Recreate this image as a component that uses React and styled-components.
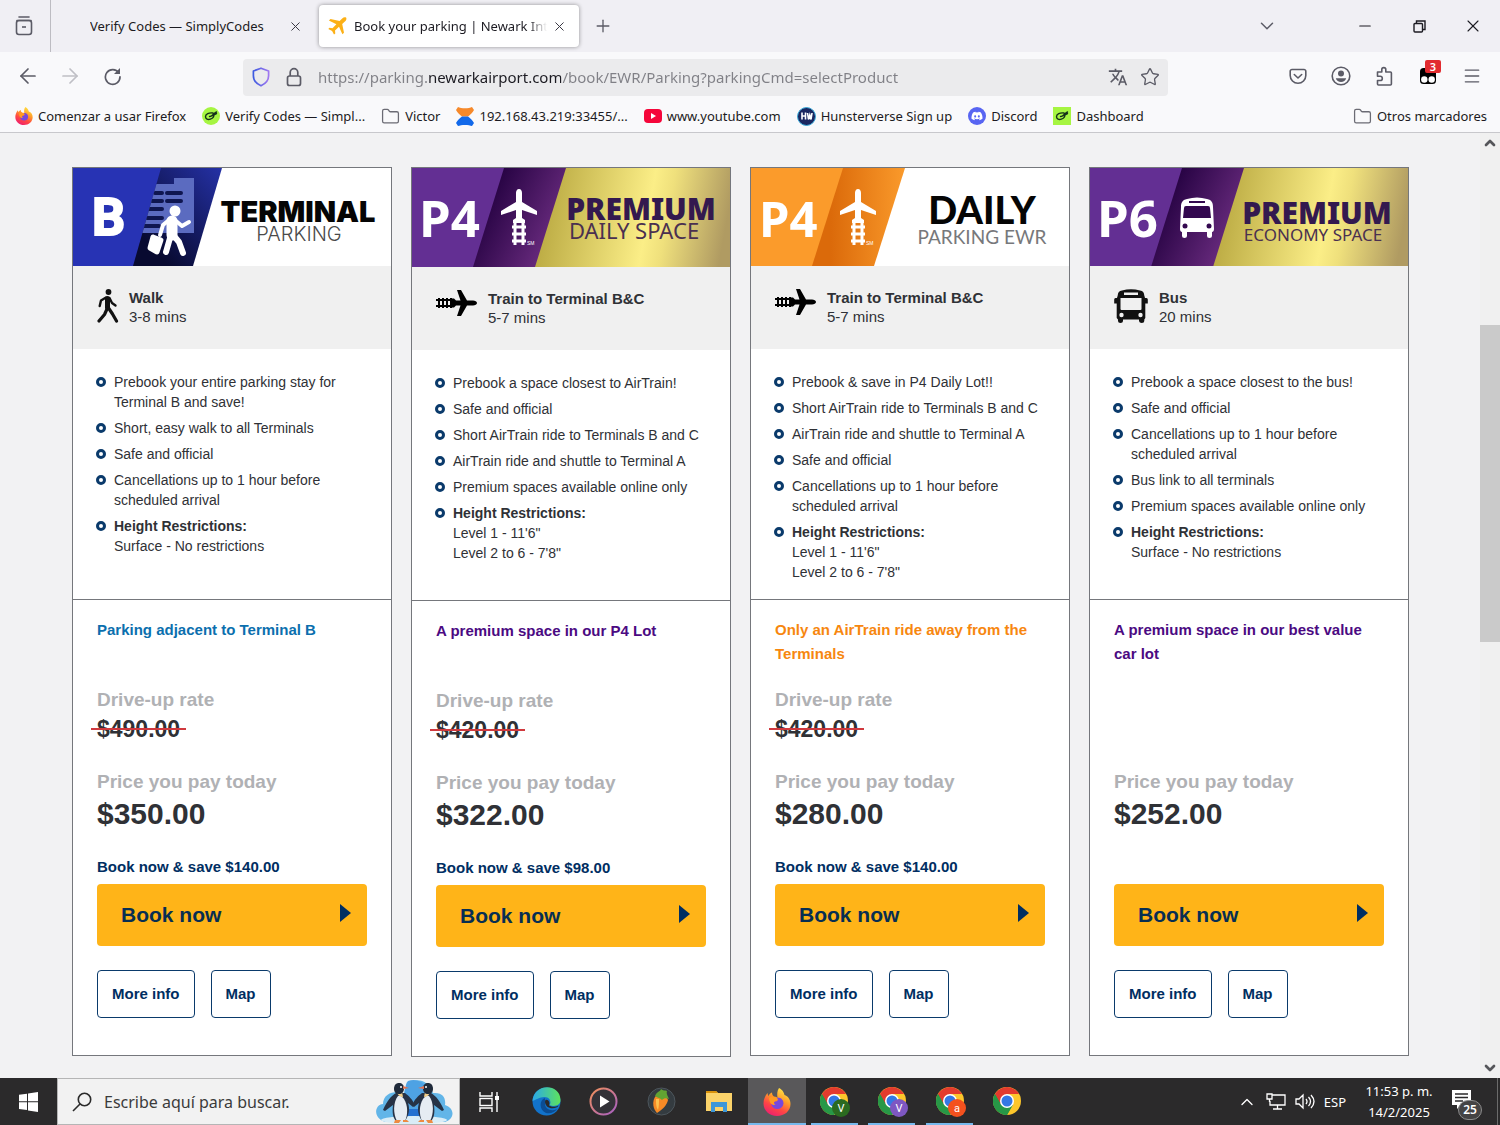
import React, { useId } from "react";
import styled, { createGlobalStyle } from "styled-components";
import {
  ArrowLeft,
  ArrowRight,
  ChevronDown,
  ChevronUp,
  Folder,
  Menu,
  Minus,
  Plus,
  Star,
  X,
} from "lucide-react";
import { FaDiscord } from "react-icons/fa";
import { MdTranslate } from "react-icons/md";

const uiFont = `"Noto Sans", "Open Sans", sans-serif`;
const pageFont = `"Liberation Sans", Arial, sans-serif`;

const products = [
  {
    banner: "terminal",
    mode: "walk",
    transit: "Walk",
    time: "3-8 mins",
    features: [
      "Prebook your entire parking stay for Terminal B and save!",
      "Short, easy walk to all Terminals",
      "Safe and official",
      "Cancellations up to 1 hour before scheduled arrival",
    ],
    heights: ["Surface - No restrictions"],
    tagline: "Parking adjacent to Terminal B",
    color: "#0b6fae",
    driveUp: "$490.00",
    price: "$350.00",
    save: "$140.00",
  },
  {
    banner: "premiumDaily",
    mode: "train",
    transit: "Train to Terminal B&C",
    time: "5-7 mins",
    features: [
      "Prebook a space closest to AirTrain!",
      "Safe and official",
      "Short AirTrain ride to Terminals B and C",
      "AirTrain ride and shuttle to Terminal A",
      "Premium spaces available online only",
    ],
    heights: ["Level 1 - 11'6\"", "Level 2 to 6 - 7'8\""],
    tagline: "A premium space in our P4 Lot",
    color: "#4b0a82",
    driveUp: "$420.00",
    price: "$322.00",
    save: "$98.00",
  },
  {
    banner: "daily",
    mode: "train",
    transit: "Train to Terminal B&C",
    time: "5-7 mins",
    features: [
      "Prebook & save in P4 Daily Lot!!",
      "Short AirTrain ride to Terminals B and C",
      "AirTrain ride and shuttle to Terminal A",
      "Safe and official",
      "Cancellations up to 1 hour before scheduled arrival",
    ],
    heights: ["Level 1 - 11'6\"", "Level 2 to 6 - 7'8\""],
    tagline: "Only an AirTrain ride away from the Terminals",
    color: "#f7870f",
    driveUp: "$420.00",
    price: "$280.00",
    save: "$140.00",
  },
  {
    banner: "economy",
    mode: "bus",
    transit: "Bus",
    time: "20 mins",
    features: [
      "Prebook a space closest to the bus!",
      "Safe and official",
      "Cancellations up to 1 hour before scheduled arrival",
      "Bus link to all terminals",
      "Premium spaces available online only",
    ],
    heights: ["Surface - No restrictions"],
    tagline: "A premium space in our best value car lot",
    color: "#4b0a82",
    price: "$252.00",
  },
];

const GlobalStyle = createGlobalStyle`
  *, *::before, *::after {
    box-sizing: border-box;
  }
  body {
    margin: 0;
    background: #f2f2f3;
    font-family: ${pageFont};
    color: #2f3136;
  }
  button, input {
    font: inherit;
    color: inherit;
  }
  svg {
    display: block;
    flex-shrink: 0;
  }
`;

const Screen = styled.div`
  display: flex;
  flex-direction: column;
  min-height: 100vh;
`;

/* ---------- browser ---------- */

const Browser = styled.header`
  font-family: ${uiFont};
  font-size: 13px;
  color: #1c1b22;
  background: #f9f9fb;
  border-bottom: 1px solid #c8c8cc;
`;

const IconButton = styled.button`
  display: flex;
  align-items: center;
  justify-content: center;
  width: ${(props) => props.$width || 42}px;
  height: 36px;
  padding: 0;
  border: 0;
  background: none;
  color: ${(props) => props.$color || "#5b5b66"};
`;

const TabStrip = styled.div`
  display: flex;
  align-items: center;
  height: 52px;
  background: #f0eff4;
`;

const RecentView = styled.div`
  display: flex;
  align-items: center;
  height: 52px;
  width: 51px;
  border-right: 1px solid #bdbcc2;
`;

const Tab = styled.div`
  display: flex;
  align-items: center;
  width: 260px;
  height: 42px;
  margin-left: ${(props) => (props.$active ? 0 : 8)}px;
  padding: ${(props) => (props.$active ? "0 8px 0 9px" : "0 12px 0 31px")};
  border-radius: 4px;
  background: ${(props) => (props.$active ? "#fff" : "transparent")};
  box-shadow: ${(props) => (props.$active ? "0 0 4px rgba(0, 0, 0, 0.4)" : "none")};
`;

const TabTitle = styled.span`
  flex: 1;
  margin-left: ${(props) => (props.$icon ? 7 : 0)}px;
  overflow: hidden;
  white-space: nowrap;
  mask-image: ${(props) => (props.$icon ? "linear-gradient(90deg, #000 90%, transparent)" : "none")};
`;

const WindowButtons = styled.div`
  display: flex;
  margin-left: auto;
`;

const NavBar = styled.div`
  display: flex;
  align-items: center;
  height: 48px;
  padding: 0 7px;
`;

const UrlBar = styled.div`
  display: flex;
  align-items: center;
  flex: 1;
  height: 37px;
  margin: 2px 108px 0 110px;
  padding: 0 3px 0 9px;
  border-radius: 4px;
  background: #ebebed;
`;

/* the host name is darker than the rest of the address */
const UrlInput = styled.input`
  flex: 1;
  min-width: 0;
  height: 30px;
  padding: 0;
  border: 0;
  font-size: 15px;
  outline: none;
  color: transparent;
  background: linear-gradient(90deg, #808086 110px, #1c1b22 110px, #1c1b22 243px, #808086 243px);
  background-clip: text;
  -webkit-background-clip: text;
`;

const ExtensionIcon = styled.span`
  position: relative;
`;

const ExtensionBadge = styled.span`
  position: absolute;
  top: -7px;
  left: 6px;
  width: 16px;
  height: 13px;
  border-radius: 2px;
  background: #e22b2f;
  color: #fff;
  font-size: 11px;
  font-weight: 600;
  line-height: 13px;
  text-align: center;
`;

const BookmarkBar = styled.nav`
  display: flex;
  align-items: center;
  gap: 16px;
  height: 32px;
  padding: 0 13px 0 15px;
`;

const Bookmark = styled.a`
  display: flex;
  align-items: center;
  gap: 5px;
  margin-left: ${(props) => (props.$last ? "auto" : 0)};
  color: inherit;
  text-decoration: none;
  white-space: nowrap;
`;

const RecentIcon = () => (
  <svg width="18" height="20" viewBox="0 0 18 20" fill="none" stroke="#5b5b66" strokeWidth="1.6">
    <path d="M4 1h10" strokeLinecap="round" />
    <path d="M2 4.5h14" strokeLinecap="round" />
    <rect x="1.5" y="4.5" width="15" height="14" rx="2.5" />
    <path d="M7 11h4" />
  </svg>
);

const ReloadIcon = () => (
  <svg width="19" height="19" viewBox="0 0 19 19" fill="none" stroke="#5b5b66" strokeWidth="1.7">
    <path d="M15.8 6A7.3 7.3 0 1 0 17 9.8" strokeLinecap="round" />
    <path d="M17 1v6h-6z" fill="#5b5b66" stroke="none" />
  </svg>
);

const PlaneIcon = () => (
  <svg width="19" height="18" viewBox="0 0 19 18" fill="#fcb016">
    <path d="M18 .6c-1-.9-2.600-.3-3.800.8L11.600 4 2.500 2 .9 3.400l7.500 3.800-3.900 4-3-.4L.3 12l3.800 2.100L6 17.600l1.300-1.100-.3-3.100 4-3.700 3.400 7.600 1.600-1.500L14.200 7l2.700-2.500C18.200 3.300 18.900 1.600 18 .6z" />
  </svg>
);

const ShieldIcon = () => {
  const id = useId();
  return (
    <svg width="18" height="20" viewBox="0 0 18 20" fill="none">
      <defs>
        <linearGradient id={id}>
          <stop offset="0" stopColor="#3d5be0" />
          <stop offset="1" stopColor="#a078f0" />
        </linearGradient>
      </defs>
      <path d="M9 1.200 16.600 4v4.800c0 4.300-2.700 7.800-7.600 10-4.900-2.200-7.600-5.700-7.600-10V4z" stroke={`url(#${id})`} strokeWidth="1.7" strokeLinejoin="round" />
    </svg>
  );
};

const LockIcon = () => (
  <svg width="16" height="20" viewBox="0 0 16 20" fill="none" stroke="#5b5b66" strokeWidth="1.700">
    <rect x="1.500" y="9" width="13" height="9.500" rx="2" />
    <path d="M4.200 9V5.500a3.800 3.800 0 0 1 7.600 0V9" />
  </svg>
);

const PocketIcon = () => (
  <svg width="18" height="17" viewBox="0 0 18 17" fill="none" stroke="#5b5b66" strokeWidth="1.6" strokeLinecap="round" strokeLinejoin="round">
    <path d="M3 1.500h12a1.800 1.800 0 0 1 1.800 1.800V7.500a7.800 7.800 0 0 1-15.600 0V3.300A1.800 1.800 0 0 1 3 1.500z" />
    <path d="M5.300 6.500 9 10l3.700-3.500" />
  </svg>
);

const AccountIcon = () => (
  <svg width="20" height="20" viewBox="0 0 20 20">
    <circle cx="10" cy="10" r="8.800" fill="none" stroke="#5b5b66" strokeWidth="1.600" />
    <circle cx="10" cy="7.500" r="3" fill="#5b5b66" />
    <path d="M4.800 12.300h10.400c-.5 2.400-2.800 3.700-5.200 3.700s-4.700-1.300-5.200-3.700z" fill="#5b5b66" />
  </svg>
);

const PuzzleIcon = () => (
  <svg width="18" height="20" viewBox="0 0 18 20" fill="none" stroke="#5b5b66" strokeWidth="1.600" strokeLinejoin="round">
    <path d="M2.500 6h4.300V3.600a2 2 0 0 1 4 0V6h4.600a1 1 0 0 1 1 1v11a1 1 0 0 1-1 1H3.500a1 1 0 0 1-1-1v-3.500h2.700a2 2 0 0 0 0-4.200H2.500z" />
  </svg>
);

const MonkeyIcon = () => (
  <svg width="18" height="18" viewBox="0 0 18 18">
    <rect x="1" y="1" width="16" height="16" rx="3.500" />
    <circle cx="5.300" cy="12.500" r="3.200" fill="#fff" />
    <circle cx="12.700" cy="12.500" r="3.200" fill="#fff" />
  </svg>
);

const RestoreIcon = () => (
  <svg width="13" height="13" viewBox="0 0 13 13" fill="none" stroke="#1c1b22" strokeWidth="1.400">
    <rect x="1" y="3.500" width="8.500" height="8.500" rx="1" />
    <path d="M3.500 3.500V1H12v8.500H9.500" />
  </svg>
);

const FirefoxIcon = ({ size }) => {
  const id = useId();
  return (
    <svg width={size} height={size} viewBox="0 0 28 28">
      <defs>
        <linearGradient id={id} x1="0.800" y1="0" x2="0.300" y2="1">
          <stop offset="0" stopColor="#fff04a" />
          <stop offset="0.400" stopColor="#ff9a28" />
          <stop offset="0.700" stopColor="#ff4545" />
          <stop offset="1" stopColor="#ee1f70" />
        </linearGradient>
      </defs>
      <path d="M16 0c4 2 5 5 5.500 7C25 8 27.500 11.500 27.500 16c0 7-6 12-13.500 12S.5 22.500.5 15.500c0-4 1.500-7.500 4-10.500l.7 3.200C6 6.500 7.500 5 9 4.500c0 1.500.5 3 2 4 2 .3 3 .5 3.500 1.500C14 6 14 3 16 0z" fill={`url(#${id})`} />
      <path d="M14.500 9.500c4 0 6 3 6 6a6.300 6.300 0 0 1-12.500 0c0-1 .2-2 .8-2.800 1 .8 2.200 1 3.700.8 1-.2 2-.8 2.500-1.600-1-.3-1.500-1-.5-2.400z" fill="#7748dc" />
      <path d="M6 10c2-1.500 4-1.500 5.500-.5 1.500.3 3 .7 3.500 1.800-1 1.200-2.500 1.400-3.500 2.400-1 .8-.5 2.300 1 2.800-3 1.500-6-1-6.500-6.500z" fill="#ff9a22" />
    </svg>
  );
};

const SimplyCodesIcon = ({ round }) => (
  <svg width="18" height="18" viewBox="0 0 18 18">
    <rect width="18" height="18" rx={round ? 9 : 0} fill="#a6f542" />
    <path d="M11 6C7 5.500 3.500 7 3.500 9.800c0 2.300 2.500 3.200 4.800 2.400 2.700-.9 3.900-3 3.400-5.200M7.500 9.500c2 .5 4-3 7-4.500M10.500 8.500l4-2" fill="none" stroke="#14301a" strokeWidth="1.400" strokeLinecap="round" />
  </svg>
);

const HourglassIcon = () => (
  <svg width="18" height="19" viewBox="0 0 18 19">
    <path d="M2 0c3 1.800 11 1.800 14 0l2 3c-1.500 3-4 5-6 6.500H6C4 8 1.500 6 0 3z" fill="#f6892b" />
    <path d="M2 19c3-1.500 11-1.500 14 0l2-3c-1.500-3-4-5-6-6.500H6C4 11 1.500 13 0 16z" fill="#1269ea" />
    <path d="M0 6.500 5 9.500 0 12.500zM18 6.500l-5 3 5 3z" fill="#f9f9fb" />
  </svg>
);

const YoutubeIcon = () => (
  <svg width="18" height="14" viewBox="0 0 18 14">
    <rect width="18" height="14" rx="4" fill="#f5063a" />
    <path d="m7 4 5 3-5 3z" fill="#fff" />
  </svg>
);

const HunsterIcon = () => (
  <svg width="19" height="19" viewBox="0 0 19 19">
    <circle cx="9.500" cy="9.500" r="9" fill="#1a2760" stroke="#39a9d8" />
    <path d="M5 5.500v7M8.500 5.500v7M5 9h3.500M10.500 6l1 6.500 1.300-4.500 1.200 4.500 1-6.500" fill="none" stroke="#fff" strokeWidth="1.600" />
  </svg>
);

const DiscordBadge = styled.span`
  display: flex;
  align-items: center;
  justify-content: center;
  width: 18px;
  height: 18px;
  border-radius: 50%;
  background: #5865f2;
  color: #fff;
`;

const FolderIcon = () => <Folder size={19} strokeWidth={1.600} color="#6b6b74" />;

const bookmarks = [
  { label: "Comenzar a usar Firefox", icon: <FirefoxIcon size={18} /> },
  { label: "Verify Codes — Simpl...", icon: <SimplyCodesIcon round /> },
  { label: "Victor", icon: <FolderIcon /> },
  { label: "192.168.43.219:33455/...", icon: <HourglassIcon /> },
  { label: "www.youtube.com", icon: <YoutubeIcon /> },
  { label: "Hunsterverse Sign up", icon: <HunsterIcon /> },
  { label: "Discord", icon: <DiscordBadge><FaDiscord size={12} /></DiscordBadge> },
  { label: "Dashboard", icon: <SimplyCodesIcon /> },
  { label: "Otros marcadores", icon: <FolderIcon />, last: true },
];

const BrowserChrome = () => (
  <Browser>
    <TabStrip>
      <RecentView>
        <IconButton $width={48} aria-label="Recent"><RecentIcon /></IconButton>
      </RecentView>
      <Tab>
        <TabTitle>Verify Codes — SimplyCodes</TabTitle>
        <IconButton $width={24} $color="#3a3944" aria-label="Close tab"><X size={15} strokeWidth={1.600} /></IconButton>
      </Tab>
      <Tab $active>
        <PlaneIcon />
        <TabTitle $icon>Book your parking | Newark International</TabTitle>
        <IconButton $width={24} $color="#3a3944" aria-label="Close tab"><X size={15} strokeWidth={1.600} /></IconButton>
      </Tab>
      <IconButton $width={48} aria-label="New tab"><Plus size={20} strokeWidth={1.600} /></IconButton>
      <WindowButtons>
        <IconButton $width={142} aria-label="All tabs"><ChevronDown size={22} strokeWidth={1.600} /></IconButton>
        <IconButton $width={54} $color="#1c1b22" aria-label="Minimize"><Minus size={18} strokeWidth={1.500} /></IconButton>
        <IconButton $width={54} aria-label="Restore"><RestoreIcon /></IconButton>
        <IconButton $width={54} $color="#1c1b22" aria-label="Close"><X size={20} strokeWidth={1.300} /></IconButton>
      </WindowButtons>
    </TabStrip>
    <NavBar>
      <IconButton aria-label="Back"><ArrowLeft size={24} strokeWidth={1.700} /></IconButton>
      <IconButton $color="#bfbfc5" aria-label="Forward"><ArrowRight size={24} strokeWidth={1.700} /></IconButton>
      <IconButton aria-label="Reload"><ReloadIcon /></IconButton>
      <UrlBar>
        <ShieldIcon />
        <IconButton $width={48} aria-label="Site information"><LockIcon /></IconButton>
        <UrlInput aria-label="Address" defaultValue="https://parking.newarkairport.com/book/EWR/Parking?parkingCmd=selectProduct" />
        <IconButton $width={34} aria-label="Translate"><MdTranslate size={20} /></IconButton>
        <IconButton $width={30} aria-label="Bookmark"><Star size={20} strokeWidth={1.600} /></IconButton>
      </UrlBar>
      <IconButton $width={44} aria-label="Pocket"><PocketIcon /></IconButton>
      <IconButton $width={42} aria-label="Account"><AccountIcon /></IconButton>
      <IconButton $width={44} aria-label="Extensions"><PuzzleIcon /></IconButton>
      <IconButton $width={44} aria-label="Scripts">
        <ExtensionIcon>
          <MonkeyIcon />
          <ExtensionBadge>3</ExtensionBadge>
        </ExtensionIcon>
      </IconButton>
      <IconButton $width={43} aria-label="Menu"><Menu size={20} strokeWidth={1.600} /></IconButton>
    </NavBar>
    <BookmarkBar>
      {bookmarks.map((item) => (
        <Bookmark key={item.label} href="#" $last={item.last}>
          {item.icon}
          {item.label}
        </Bookmark>
      ))}
    </BookmarkBar>
  </Browser>
);

/* ---------- banners ---------- */

const BannerSvg = styled.svg`
  width: 100%;
  height: auto;
`;

const ControlTower = () => (
  <g fill="#fff">
    <path d="M107 21c2 0 3 2 3 4v9l15 9v4l-15-5v8l3 2v3h-12v-3l3-2v-8l-15 5v-4l15-9v-9c0-2 1-4 3-4z" />
    <path d="M103 53v24M111 53v24M100 59h14M100 66h14M100 73h14" stroke="#fff" strokeWidth="3" />
    <text x="115" y="77" fontSize="5" fontFamily="Liberation Sans">SM</text>
  </g>
);

const BannerBus = () => (
  <g>
    <path d="M97 31q10-3 20 0c5 1 6 4 6 8l1 22c0 2-1 3-2 3v4q0 2-2.500 2t-2.500-2v-4H97v4q0 2-2.500 2T92 68v-4c-1 0-2-1-2-3l1-22c0-4 1-7 6-8z" fill="#fff" />
    <path d="M99 33h16v2H99zM96 38h22q2 0 2 2l1 10H93l1-10q0-2 2-2z" fill="#33084f" />
    <circle cx="95" cy="58" r="2.500" fill="#33084f" />
    <circle cx="119" cy="58" r="2.500" fill="#33084f" />
  </g>
);

const PurpleGold = ({ id, code, children }) => (
  <>
    <defs>
      <linearGradient id={`${id}-strip`} x1="0" y1="0" x2="1" y2="0.500">
        <stop offset="0.200" stopColor="#22003f" />
        <stop offset="1" stopColor="#6b2c80" />
      </linearGradient>
      <linearGradient id={`${id}-gold`} gradientUnits="userSpaceOnUse" x1="125" y1="0" x2="318" y2="35">
        <stop offset="0" stopColor="#b3a23a" />
        <stop offset="0.600" stopColor="#fbee87" />
        <stop offset="0.700" stopColor="#efe07c" />
        <stop offset="1" stopColor="#b09b62" />
      </linearGradient>
    </defs>
    <path d="M0 0h318v99H0z" fill={`url(#${id}-gold)`} />
    <path d="M0 0h93L62 99H0z" fill="#632f93" />
    <path d="M92 0h62l-31 99H61z" fill={`url(#${id}-strip)`} />
    <text x="7" y="69" fontSize="51" fontWeight="700" fontFamily="Noto Sans" fill="#fff">{code}</text>
    {children}
  </>
);

const banners = {
  terminal: {
    title: "B Terminal parking",
    height: 98,
    art: (id) => (
      <>
        <defs>
          <linearGradient id={`${id}-strip`} x1="0" y1="1" x2="1" y2="0">
            <stop offset="0.200" stopColor="#080a30" />
            <stop offset="1" stopColor="#2531a6" />
          </linearGradient>
          <clipPath id={`${id}-clip`}>
            <path d="M88 0h61l-29 98H60z" />
          </clipPath>
        </defs>
        <path d="M0 0h318v98H0z" fill="#fff" />
        <path d="M0 0h89L61 98H0z" fill="#2733b4" />
        <path d="M88 0h61l-29 98H60z" fill={`url(#${id}-strip)`} />
        <g clipPath={`url(#${id}-clip)`}>
          <path d="M60 16h41v-6h20v55H60z" fill="#5b6bc0" />
          <path d="M82 25h7M94 25h14M79 33h10M94 33h14M76 41h13M74 50h15M71 58h15" stroke="#0f1650" strokeWidth="4" strokeLinecap="round" />
        </g>
        <g stroke="#fff" fill="none" strokeLinecap="round" strokeLinejoin="round">
          <circle cx="102" cy="43" r="5.500" fill="#fff" stroke="none" />
          <path d="M99 53v14" strokeWidth="11" />
          <path d="M96 52l-6 5-3 10" strokeWidth="4" />
          <path d="M103 53l6 5 7-4" strokeWidth="4" />
          <path d="M97 70l-4 14M101 68l5 6 4 11" strokeWidth="6" />
          <path d="M80 69l8 3-4 12-7-4z" fill="#fff" strokeWidth="5" />
        </g>
        <text x="19" y="67" fontSize="52" fontWeight="700" fontFamily="Liberation Sans Narrow, Roboto" fill="#fff" stroke="#fff" strokeWidth="2">B</text>
        <text x="225" y="54" textAnchor="middle" fontSize="29" fontWeight="900" fontFamily="Inter" fill="#050505">TERMINAL</text>
        <text x="226" y="73" textAnchor="middle" fontSize="20" fontWeight="300" fontFamily="Inter" fill="#4a4a4a">PARKING</text>
      </>
    ),
  },
  premiumDaily: {
    title: "P4 Premium daily space",
    height: 99,
    art: (id) => (
      <PurpleGold id={id} code="P4">
        <ControlTower />
        <text x="229" y="52" textAnchor="middle" fontSize="30" fontWeight="900" fontFamily="Noto Sans" fill="#33194f">PREMIUM</text>
        <text x="222" y="71" textAnchor="middle" fontSize="22" fontFamily="Noto Sans" fill="#4a3050">DAILY SPACE</text>
      </PurpleGold>
    ),
  },
  daily: {
    title: "P4 Daily parking EWR",
    height: 98,
    art: (id) => (
      <>
        <defs>
          <linearGradient id={`${id}-strip`} x1="0" y1="0" x2="1" y2="0">
            <stop offset="0.200" stopColor="#db6a0a" />
            <stop offset="1" stopColor="#fa9a2b" />
          </linearGradient>
        </defs>
        <path d="M0 0h318v98H0z" fill="#fff" />
        <path d="M0 0h93L62 98H0z" fill="#fb9b2b" />
        <path d="M92 0h62l-31 98H61z" fill={`url(#${id}-strip)`} />
        <text x="8" y="69" fontSize="49" fontWeight="700" fontFamily="Noto Sans" fill="#fff">P4</text>
        <ControlTower />
        <text x="231" y="56" textAnchor="middle" fontSize="38" fontWeight="900" fontFamily="Lato" fill="#050505">DAILY</text>
        <text x="231" y="76" textAnchor="middle" fontSize="19" fontFamily="Lato" fill="#77787b">PARKING EWR</text>
      </>
    ),
  },
  economy: {
    title: "P6 Premium economy space",
    height: 98,
    art: (id) => (
      <PurpleGold id={id} code="P6">
        <BannerBus />
        <text x="227" y="56" textAnchor="middle" fontSize="30" fontWeight="900" fontFamily="Noto Sans" fill="#33194f">PREMIUM</text>
        <text x="223" y="73" textAnchor="middle" fontSize="17" fontFamily="Noto Sans" fill="#4a3050">ECONOMY SPACE</text>
      </PurpleGold>
    ),
  },
};

const Banner = ({ name }) => {
  const id = useId();
  const { title, height, art } = banners[name];
  return (
    <BannerSvg viewBox={`0 0 318 ${height}`} role="img" aria-label={title}>
      {art(id)}
    </BannerSvg>
  );
};

const WalkIcon = () => (
  <svg width="22" height="34" viewBox="0 0 22 34" fill="none" stroke="#111" strokeLinecap="round" strokeLinejoin="round">
    <circle cx="11.500" cy="3" r="2.900" fill="#111" stroke="none" />
    <path d="M10.500 9.500v9" strokeWidth="5" />
    <path d="M9 8.500 4 11.500 2.700 17M12.500 9l2.500 5 3.500 2.500" strokeWidth="2.400" />
    <path d="M10 20 7.500 25.500 2 32M11.500 19l4 6 4 7" strokeWidth="3.200" />
  </svg>
);

const TrainIcon = () => (
  <svg width="42" height="26" viewBox="0 0 42 26">
    <path d="M41 13c0-1.500-2-2.500-4-2.500h-6L25 0h-4l3.500 10.500H20l-2-2h-2v9h2l2-2h4.500L21 26h4l6-10.500h6c2 0 4-1 4-2.500z" />
    <path d="M0 10h18M0 16h18M3 8v10M7 8v10M11 8v10M15 8v10" stroke="#000" strokeWidth="2" />
  </svg>
);

const BusIcon = () => (
  <svg width="34" height="34" viewBox="0 0 34 34">
    <path d="M8 1.500q9-2.500 18 0c3 .5 4 2 4.300 5L31 9h1.500q1.300 0 1.300 1.500v4h-2.500V29l-1 1.500V32q0 2-2.500 2T25 32v-1.500H9V32q0 2-2.500 2T4 32v-1.500L2.700 29V14.500H.2v-4Q.2 9 1.500 9H3l.7-2.500c.3-3 1.300-4.500 4.300-5z" fill="#111" />
    <path d="M10 3.500h14v2.500H10zM6.500 9h21v11q0 1-1 1h-19q-1 0-1-1z" fill="#f0f0f0" />
    <circle cx="7.500" cy="26" r="2.200" fill="#f0f0f0" />
    <circle cx="26.500" cy="26" r="2.200" fill="#f0f0f0" />
  </svg>
);

/* ---------- cards ---------- */

const modes = {
  walk: { icon: <WalkIcon />, width: 22, height: 36, gap: 10 },
  train: { icon: <TrainIcon />, width: 42, height: 28, gap: 10 },
  bus: { icon: <BusIcon />, width: 34, height: 36, gap: 11 },
};

const Viewport = styled.div`
  display: flex;
  flex: 1;
`;

const CardGrid = styled.main`
  display: grid;
  grid-template-columns: repeat(4, minmax(0, 1fr));
  align-items: start;
  gap: 19px;
  flex: 1;
  padding: 34px 71px 21px 72px;
`;

const Card = styled.article`
  border: 1px solid #75777c;
  background: #fff;
`;

const Transit = styled.div`
  display: flex;
  gap: ${(props) => props.$gap}px;
  height: 83px;
  padding: 22px 24px 0;
  background: #f0f0f0;
  font-size: 15px;
  line-height: 19px;
`;

const TransitIcon = styled.div`
  display: flex;
  align-items: center;
  justify-content: center;
  width: ${(props) => props.$width}px;
  height: ${(props) => props.$height}px;
`;

const TransitText = styled.div`
  display: flex;
  flex-direction: column;
`;

const Features = styled.ul`
  display: flex;
  flex-direction: column;
  gap: 6px;
  min-height: 251px;
  margin: 0;
  padding: 23px 20px 0 23px;
  border-bottom: 1px solid #75777c;
  list-style: none;
  font-size: 14px;
  line-height: 20px;
`;

const Feature = styled.li`
  display: flex;
  gap: 8px;

  &::before {
    content: "";
    flex: none;
    width: 10px;
    height: 10px;
    margin-top: 5px;
    border: 3px solid #0a3a6b;
    border-radius: 50%;
  }
`;

const Pricing = styled.div`
  display: flex;
  flex-direction: column;
  padding: 18px 24px 37px;
`;

const Tagline = styled.h2`
  min-height: 48px;
  margin: 0;
  color: ${(props) => props.$color};
  font-size: 15px;
  line-height: 24px;
`;

const Rate = styled.div`
  min-height: 58px;
  margin-top: 22px;
`;

const RateLabel = styled.div`
  color: #b0b1b4;
  font-size: 19px;
  font-weight: 700;
  line-height: 24px;
`;

const OldPrice = styled.s`
  display: inline-block;
  position: relative;
  font-size: 23px;
  font-weight: 700;
  line-height: 34px;
  text-decoration: none;

  &::after {
    content: "";
    position: absolute;
    left: -6px;
    right: -6px;
    top: 16px;
    height: 2px;
    background: #d0393e;
  }
`;

const TodayRate = styled.div`
  margin-top: 24px;
`;

const Price = styled.div`
  font-size: 30px;
  font-weight: 700;
  line-height: 40px;
`;

const Saving = styled.div`
  min-height: 24px;
  margin: 21px 0 5px;
  color: #002e62;
  font-size: 15px;
  font-weight: 700;
  line-height: 24px;
`;

const BookButton = styled.button`
  display: flex;
  align-items: center;
  justify-content: space-between;
  height: 62px;
  padding: 0 16px 0 24px;
  border: 0;
  border-radius: 4px;
  background: #ffb418;
  color: #072e52;
  font-size: 21px;
  font-weight: 700;

  &::after {
    content: "";
    margin-bottom: 4px;
    border: solid transparent;
    border-width: 9px 0 9px 11px;
    border-left-color: #002e62;
  }
`;

const CardLinks = styled.div`
  display: flex;
  gap: 16px;
  margin-top: 24px;
`;

const OutlineButton = styled.button`
  height: 48px;
  padding: 0 14px 2px;
  border: 1px solid #0a3a6b;
  border-radius: 4px;
  background: #fff;
  color: #002e62;
  font-size: 15px;
  font-weight: 700;
`;

const ProductCard = (props) => {
  const { banner, mode, transit, time, features, heights, tagline, color, driveUp, price, save } = props;
  const { icon, width, height, gap } = modes[mode];
  return (
    <Card>
      <Banner name={banner} />
      <Transit $gap={gap}>
        <TransitIcon $width={width} $height={height}>{icon}</TransitIcon>
        <TransitText>
          <strong>{transit}</strong>
          <span>{time}</span>
        </TransitText>
      </Transit>
      <Features>
        {features.map((text) => (
          <Feature key={text}>{text}</Feature>
        ))}
        <Feature>
          <div>
            <strong>Height Restrictions:</strong>
            {heights.map((line) => (
              <div key={line}>{line}</div>
            ))}
          </div>
        </Feature>
      </Features>
      <Pricing>
        <Tagline $color={color}>{tagline}</Tagline>
        <Rate>
          {driveUp && (
            <>
              <RateLabel>Drive-up rate</RateLabel>
              <OldPrice>{driveUp}</OldPrice>
            </>
          )}
        </Rate>
        <TodayRate>
          <RateLabel>Price you pay today</RateLabel>
          <Price>{price}</Price>
        </TodayRate>
        <Saving>{save && `Book now & save ${save}`}</Saving>
        <BookButton>Book now</BookButton>
        <CardLinks>
          <OutlineButton>More info</OutlineButton>
          <OutlineButton>Map</OutlineButton>
        </CardLinks>
      </Pricing>
    </Card>
  );
};

const ScrollBar = styled.div`
  display: flex;
  flex-direction: column;
  align-items: center;
  width: 20px;
  background: #f0f0f0;
  color: #55565a;
`;

const ScrollArrow = styled.div`
  display: flex;
  align-items: center;
  height: 20px;
`;

const ScrollTrack = styled.div`
  display: flex;
  flex-direction: column;
  flex: 1;
  width: 100%;
`;

const ScrollThumb = styled.div`
  flex: 0 0 35%;
  background: #cacaca;
`;

const ScrollSpace = styled.div`
  flex: 0 0 19%;
`;

/* ---------- taskbar ---------- */

const TaskBar = styled.footer`
  display: flex;
  height: 47px;
  background: #2b2a2b;
  color: #fff;
  font-family: ${uiFont};
`;

const StartButton = styled.button`
  display: flex;
  align-items: center;
  justify-content: center;
  width: 57px;
  padding: 0;
  border: 0;
  background: none;
`;

const AppList = styled.div`
  display: flex;
  width: 576px;
`;

const AppButton = styled.button`
  display: flex;
  flex: 1;
  justify-content: center;
  padding: 0;
  border: 0;
  background: ${(props) => (props.$active ? "#59585a" : "none")};
`;

const RunningLine = styled.span`
  display: flex;
  align-items: center;
  justify-content: center;
  width: ${(props) => (props.$wide ? "100%" : "47px")};
  height: 47px;
  border-top: 2px solid transparent;
  border-bottom: 2px solid ${(props) => (props.$running ? "#76b9ed" : "transparent")};
`;

const SearchBox = styled.label`
  display: flex;
  align-items: center;
  width: 403px;
  padding: 0 6px 0 14px;
  border: 1px solid #b5b5b5;
  background: #f2f2f2;
`;

const SearchInput = styled.input`
  flex: 1;
  min-width: 0;
  height: 40px;
  margin-left: 12px;
  padding: 0;
  border: 0;
  outline: none;
  background: none;
  font-size: 16px;

  &::placeholder {
    color: #3b3b3b;
    opacity: 1;
  }
`;

const Tray = styled.div`
  display: flex;
  align-items: center;
  gap: 9px;
  margin-left: auto;
  padding-right: 2px;
  font-size: 13px;
`;

const Clock = styled.time`
  width: 72px;
  margin: 0 8px;
  text-align: center;
  line-height: 21px;
`;

const NoticeButton = styled.button`
  position: relative;
  width: 46px;
  padding: 0 0 4px;
  border: 0;
  border-right: 1px solid #6b6b6b;
  background: none;
  align-self: stretch;
`;

const NoticeCount = styled.span`
  position: absolute;
  left: 6px;
  top: 22px;
  width: 24px;
  height: 20px;
  border: 1px solid #8b8b8b;
  border-radius: 10px;
  background: #454445;
  color: #fff;
  font-size: 12px;
  font-weight: 600;
  line-height: 18px;
  text-align: center;
`;

const WindowsIcon = () => (
  <svg width="19" height="20" viewBox="0 0 19 20" fill="#fff">
    <path d="M0 2.800 8 1.700v7.600H0zM9 1.500 19 0v9.300H9zM0 10.300h8V18l-8-1.100zM9 10.300h10V20L9 18.500z" />
  </svg>
);

const SearchIcon = () => (
  <svg width="20" height="20" viewBox="0 0 20 20" fill="none" stroke="#2b2b2b" strokeWidth="1.600">
    <circle cx="12.500" cy="7.500" r="6.200" />
    <path d="M8 12 1 19" />
  </svg>
);

const Penguin = () => (
  <g>
    <path d="M21 13c-5 3-9 8-13 17l2 1 8-6c-1 8 0 13 3 16h9c4-6 5-12 3-18l5 4 2-2c-3-6-6-9-10-12z" fill="#263246" />
    <path d="M23 16c-5 6-5 18-1 25h8c3-6 3-16-1-22-2-3-4-4-6-3z" fill="#e6ecf3" />
    <path d="M22 13c2 3 4 4 6 4l-1-5z" fill="#f3cf8a" />
    <path d="M19 9c0-4 2-6 5-6s5 2 5 5c0 4-2 6-5 6s-5-2-5-5z" fill="#202b3b" />
    <circle cx="26" cy="7" r="1" fill="#fff" />
    <path d="m28 6 6 2-6 1z" fill="#e0704f" />
    <path d="M20 40h6l-2 3h-5zM28 40h4l2 2h-6z" fill="#ed8b42" />
  </g>
);

const PenguinArt = () => (
  <svg width="78" height="44" viewBox="0 0 78 44" aria-hidden="true">
    <path d="M10 42C-2 38-1 25 8 24 8 13 20 10 29 13c2-17 24-17 29 0 10-1 13 5 12 12 10 3 10 14 0 17z" fill="#62b5e8" />
    <path d="M33 1c8-3 20 1 20 14v15H30V12c0-5 1-9 3-11z" fill="#4ea2e4" />
    <path d="M30 29h18v7H30z" fill="#2371d0" />
    <ellipse cx="39" cy="40" rx="33" ry="4" fill="#d9edf7" />
    <Penguin />
    <g transform="translate(77 0) scale(-1 1)">
      <Penguin />
    </g>
  </svg>
);

const TaskViewIcon = () => (
  <svg width="20" height="20" viewBox="0 0 20 20" fill="none" stroke="#fff" strokeWidth="1.400">
    <path d="M1 0v4h12V0M1 20v-4h12v4M18 0v20" />
    <rect x="1" y="6.500" width="12" height="7" />
    <path d="M16 4h4v4h-4z" fill="#fff" stroke="none" />
  </svg>
);

const EdgeIcon = () => {
  const id = useId();
  return (
    <svg width="29" height="29" viewBox="0 0 29 29">
      <defs>
        <linearGradient id={id}>
          <stop offset="0" stopColor="#2aa8e8" />
          <stop offset="1" stopColor="#5ee35c" />
        </linearGradient>
      </defs>
      <circle cx="14.500" cy="14.500" r="14" fill="#1273cb" />
      <path d="M.5 14C2-4 28-4 28.500 13c0 6-7 7-11 5 2-2 1-8-5-8-5 0-9 3-12 4z" fill={`url(#${id})`} />
      <path d="M13 11c-6 2-6 12 1 15 5 1 9-1 11-4-6 3-11 0-12-4z" fill="#0b4d94" />
      <path d="M13.500 13c3-1 5 3 3.500 5.500 3 2 7 1.500 9.500 0-1 3-8 4-11.500 1-2-2-2.500-5-1.500-6.500z" fill="#2b2a2b" />
    </svg>
  );
};

const PlayerIcon = () => {
  const id = useId();
  return (
    <svg width="29" height="29" viewBox="0 0 29 29">
      <defs>
        <linearGradient id={id} x1="0" y1="0" x2="1" y2="1">
          <stop offset="0" stopColor="#f2905a" />
          <stop offset="1" stopColor="#a55fc4" />
        </linearGradient>
      </defs>
      <circle cx="14.500" cy="14.500" r="13" fill="#333238" stroke={`url(#${id})`} strokeWidth="2" />
      <path d="m11 8.500 9.500 6-9.500 6z" fill="#fff" />
    </svg>
  );
};

const StudioIcon = () => (
  <svg width="29" height="29" viewBox="0 0 29 29">
    <circle cx="14.500" cy="14.500" r="13.500" fill="#343b40" stroke="#4d565c" />
    <path d="M8 10c3-4 12-1 13 3-1 5-5 9-11 13-4-4-5-11-2-16z" fill="#f68a26" />
    <path d="M9 12c0 5 0 8 2 11 1-4 1-7 1-11z" fill="#ffc14e" />
    <path d="M8 9c2-5 5-4 6-7 2 2 4 1 6 2-1 3 1 5 2 8-3-1-5-1-7 1-2-2-4-2-7-4z" fill="#62a332" />
  </svg>
);

const ExplorerIcon = () => (
  <svg width="26" height="23" viewBox="0 0 26 23">
    <path d="M0 1h10l2 2h14v18H0z" fill="#fbd36a" />
    <path d="M0 1h10l2 2H0z" fill="#d9920c" />
    <path d="M5 12h16v10h-4v-5H9v5H5z" fill="#3d97d8" />
  </svg>
);

const ChromeIcon = ({ badge, color }) => (
  <svg width="32" height="31" viewBox="0 0 32 31">
    <circle cx="16" cy="15" r="14" fill="#fdc62b" />
    <path d="M16 15 3.900 8A14 14 0 0 0 16 29l6-10.500z" fill="#279847" />
    <path d="M16 15 9.900 18.500 3.900 8a14 14 0 0 1 24.200 0H16z" fill="#e33b2e" />
    <path d="M9.900 18.500 3.900 8A14 14 0 0 0 16 29l6-10.500z" fill="#279847" />
    <circle cx="16" cy="15" r="7" fill="#fff" />
    <circle cx="16" cy="15" r="5.500" fill="#3478e5" />
    {badge && (
      <>
        <circle cx="23" cy="22" r="9" fill={color} />
        <text x="23" y="26" textAnchor="middle" fontSize="11" fill="#fff" fontFamily="Roboto">{badge}</text>
      </>
    )}
  </svg>
);

const NetworkIcon = () => (
  <svg width="20" height="17" viewBox="0 0 20 17" fill="none" stroke="#fff" strokeWidth="1.300">
    <path d="M6 2h13v10H4V8M11.500 12v4M7 16h9M1 1h5v5H1zM3.500 6v3" />
  </svg>
);

const VolumeIcon = () => (
  <svg width="20" height="17" viewBox="0 0 20 17" fill="none" stroke="#fff" strokeWidth="1.300">
    <path d="M1 6h3l4-4v13l-4-4H1zM11 6q2 2.500 0 5M13.500 4q4 4.500 0 9M16 2q6 6.500 0 13" />
  </svg>
);

const apps = [
  { name: "Task view", icon: <TaskViewIcon /> },
  { name: "Edge", icon: <EdgeIcon /> },
  { name: "Media player", icon: <PlayerIcon /> },
  { name: "FL Studio", icon: <StudioIcon /> },
  { name: "Explorer", icon: <ExplorerIcon /> },
  { name: "Firefox", icon: <FirefoxIcon size={28} />, active: true, running: true },
  { name: "Chrome V", icon: <ChromeIcon badge="V" color="#2b6a20" />, running: true },
  { name: "Chrome V 2", icon: <ChromeIcon badge="V" color="#7e57c2" />, running: true },
  { name: "Chrome a", icon: <ChromeIcon badge="a" color="#f4511e" />, running: true },
  { name: "Chrome", icon: <ChromeIcon /> },
];

const WindowsTaskBar = () => (
  <TaskBar>
    <StartButton aria-label="Start"><WindowsIcon /></StartButton>
    <SearchBox>
      <SearchIcon />
      <SearchInput aria-label="Buscar" placeholder="Escribe aquí para buscar." />
      <PenguinArt />
    </SearchBox>
    <AppList>
      {apps.map((app) => (
        <AppButton key={app.name} aria-label={app.name} $active={app.active}>
          <RunningLine $running={app.running} $wide={app.active}>{app.icon}</RunningLine>
        </AppButton>
      ))}
    </AppList>
    <Tray>
      <ChevronUp size={20} strokeWidth={1.600} />
      <NetworkIcon />
      <VolumeIcon />
      <span>ESP</span>
      <Clock>
        11:53 p. m.
        <br />
        14/2/2025
      </Clock>
      <NoticeButton aria-label="Notifications">
        <svg width="19" height="20" viewBox="0 0 19 20">
          <path d="M0 0h19v15H9l-4 4v-4H0z" fill="#fff" />
          <path d="M3 4h13M3 7.500h13M3 11h8" stroke="#2b2a2b" strokeWidth="1.300" />
        </svg>
        <NoticeCount>25</NoticeCount>
      </NoticeButton>
    </Tray>
  </TaskBar>
);

const App = () => (
  <Screen>
    <GlobalStyle />
    <BrowserChrome />
    <Viewport>
      <CardGrid>
        {products.map((product) => (
          <ProductCard key={product.banner} {...product} />
        ))}
      </CardGrid>
      <ScrollBar>
        <ScrollArrow><ChevronUp size={16} strokeWidth={4} /></ScrollArrow>
        <ScrollTrack>
          <ScrollSpace />
          <ScrollThumb />
        </ScrollTrack>
        <ScrollArrow><ChevronDown size={16} strokeWidth={4} /></ScrollArrow>
      </ScrollBar>
    </Viewport>
    <WindowsTaskBar />
  </Screen>
);

export default App;
